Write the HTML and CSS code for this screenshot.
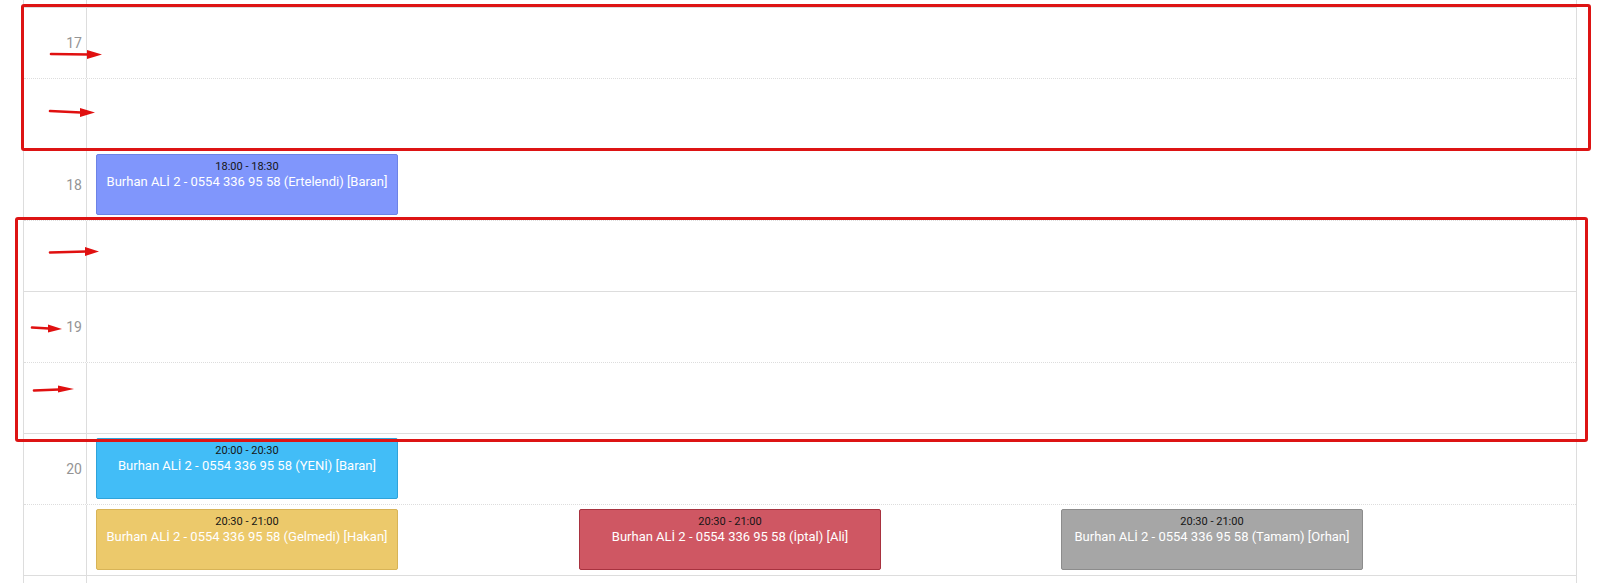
FILE: index.html
```html
<!DOCTYPE html>
<html lang="tr">
<head>
    <meta charset="UTF-8">
    <meta name="viewport" content="width=device-width, initial-scale=1.0">
    <title>Randevu Takvimi</title>
    <link rel="stylesheet" href="styles.css">
</head>
<body>
    <div class="calendar">
        <div class="slot half"><div class="axis"></div><div class="lane"></div></div>
        <div class="slot"><div class="axis">17</div><div class="lane"></div></div>
        <div class="slot half"><div class="axis"></div><div class="lane"></div></div>
        <div class="slot">
            <div class="axis">18</div>
            <div class="lane">
                <div class="event ertelendi">
                    <div class="time">18:00 - 18:30</div>
                    <div class="title">Burhan ALİ 2 - 0554 336 95 58 (Ertelendi) [Baran]</div>
                </div>
            </div>
        </div>
        <div class="slot half"><div class="axis"></div><div class="lane"></div></div>
        <div class="slot"><div class="axis">19</div><div class="lane"></div></div>
        <div class="slot half"><div class="axis"></div><div class="lane"></div></div>
        <div class="slot">
            <div class="axis">20</div>
            <div class="lane">
                <div class="event yeni">
                    <div class="time">20:00 - 20:30</div>
                    <div class="title">Burhan ALİ 2 - 0554 336 95 58 (YENİ) [Baran]</div>
                </div>
            </div>
        </div>
        <div class="slot half">
            <div class="axis"></div>
            <div class="lane">
                <div class="event gelmedi">
                    <div class="time">20:30 - 21:00</div>
                    <div class="title">Burhan ALİ 2 - 0554 336 95 58 (Gelmedi) [Hakan]</div>
                </div>
                <div class="event iptal">
                    <div class="time">20:30 - 21:00</div>
                    <div class="title">Burhan ALİ 2 - 0554 336 95 58 (İptal) [Ali]</div>
                </div>
                <div class="event tamam">
                    <div class="time">20:30 - 21:00</div>
                    <div class="title">Burhan ALİ 2 - 0554 336 95 58 (Tamam) [Orhan]</div>
                </div>
            </div>
        </div>
        <div class="slot"><div class="axis"></div><div class="lane"></div></div>
    </div>

    <!-- red markings drawn over the screenshot -->
    <svg class="marks" width="1602" height="583" viewBox="0 0 1602 583">
        <rect x="22.5" y="5.5" width="1567" height="144" rx="1.5"/>
        <rect x="16.5" y="218.5" width="1570" height="222" rx="1.5"/>
        <line x1="51" y1="54" x2="89" y2="54.5"/>
        <polygon points="87,50 102,54.5 87,59"/>
        <line x1="50" y1="111" x2="81" y2="112.5"/>
        <polygon points="80,108 95,112.5 80,117"/>
        <line x1="50" y1="252.5" x2="86" y2="251.5"/>
        <polygon points="85,247 99,251.5 85,256"/>
        <line x1="32" y1="327.5" x2="49" y2="328.5"/>
        <polygon points="48,324.5 62,329 48,332.5"/>
        <line x1="34" y1="390.5" x2="59" y2="389.5"/>
        <polygon points="58,385.5 74,389 58,392.5"/>
    </svg>
</body>
</html>
```

FILE: styles.css
```css
body{
    margin:0;
    background:#fff;
    font-family:Roboto, "Noto Sans", sans-serif;
    height:583px;
    overflow:hidden;
    position:relative;
}
.calendar{
    margin:-64px 0 0 23px;
    width:1554px;
    box-sizing:border-box;
    border-left:1px solid #ddd;
    border-right:1px solid #ddd;
}
.slot{
    display:flex;
    height:70px;
    border-top:1px solid #ddd;
}
.slot.half{
    border-top-style:dotted;
}
.axis{
    width:63px;
    flex:none;
    box-sizing:border-box;
    display:flex;
    align-items:center;
    justify-content:flex-end;
    padding-right:4px;
    border-right:1px solid #ddd;
    color:#949494;
    font-size:14px;
}
.lane{
    flex:1;
    display:grid;
    grid-template-columns:483px 482px 1fr;
    align-items:start;
    padding:4px 0 0 9px;
}
.event{
    width:302px;
    height:61px;
    box-sizing:border-box;
    border:1px solid;
    border-radius:2px;
    padding-top:6px;
    text-align:center;
    color:#fff;
}
.event .time{
    font-size:11px;
    line-height:12px;
    color:#151515;
}
.event .title{
    margin-top:2px;
    font-size:13px;
    line-height:14px;
}
.ertelendi{
    background:#8096fc;
    border-color:#6d83e6;
}
.yeni{
    background:#42bdf7;
    border-color:#2fa3da;
}
.gelmedi{
    background:#ecc96b;
    border-color:#d8b457;
}
.iptal{
    background:#cf5763;
    border-color:#a8323f;
}
.tamam{
    background:#a6a6a6;
    border-color:#8c8c8c;
}

/* MARKS */
.marks{
    position:absolute;
    top:0;
    left:0;
    pointer-events:none;
}
.marks rect{
    fill:none;
    stroke:#dd1414;
    stroke-width:3;
}
.marks line{
    stroke:#e01010;
    stroke-width:2.6;
    stroke-linecap:round;
}
.marks polygon{
    fill:#e01010;
}
```
